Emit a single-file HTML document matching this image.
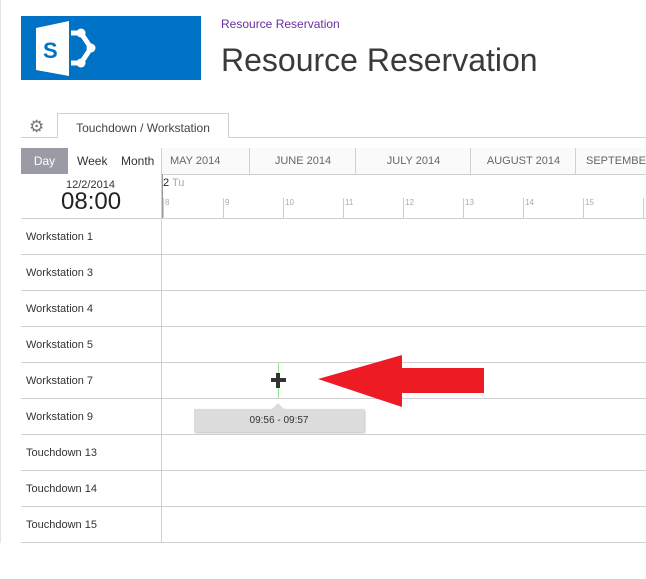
<!DOCTYPE html>
<html><head><style>
body{margin:0;width:646px;height:543px;overflow:hidden;background:#fff;font-family:"Segoe UI","Liberation Sans",sans-serif;position:relative;color:#333}
.a{position:absolute}
.row{position:absolute;left:21px;width:625px;height:36px;border-top:1px solid #d0d0d0}
.row span{position:absolute;left:5px;top:12px;font-size:11px;color:#333}
.m{position:absolute;top:148px;height:26px;border-left:1px solid #d0d0d0;font-size:11px;color:#666;line-height:26px;text-align:center;background:#fafafa}
.t{position:absolute;top:198px;height:20px;border-left:1px solid #ccc;font-size:8px;color:#aaa;padding-left:1px}
</style></head><body>
<div class="a" style="left:0;top:0;width:1px;height:543px;background:#e4e4e4"></div>
<div class="a" style="left:21px;top:16px;width:180px;height:64px;background:#0072c6"></div>
<svg class="a" style="left:36px;top:20px" width="60" height="58" viewBox="0 0 60 58">
<polygon points="0,8 33,1 33,56 0,50" fill="#fff"/>
<text x="7" y="38" font-size="22" font-weight="bold" fill="#0072c6" font-family="Liberation Sans">S</text>
<path d="M35 13 L45 13 L55 28 L45 43 L35 43" stroke="#fff" stroke-width="5" fill="none"/>
<circle cx="45" cy="13" r="4.5" fill="#fff"/><circle cx="55" cy="28" r="4.5" fill="#fff"/><circle cx="45" cy="43" r="4.5" fill="#fff"/>
</svg>
<div class="a" style="left:221px;top:17px;font-size:12px;color:#6b2ea0">Resource Reservation</div>
<div class="a" style="left:221px;top:42px;font-size:32px;font-weight:300;color:#3a3a3a">Resource Reservation</div>
<div class="a" style="left:29px;top:117px;font-size:17px;color:#777">⚙</div>
<div class="a" style="left:57px;top:113px;width:170px;height:24px;border:1px solid #d0d0d0;border-bottom:none;background:#fff;font-size:12px;line-height:29px;text-align:center;color:#444;z-index:2">Touchdown / Workstation</div>
<div class="a" style="left:21px;top:137px;width:625px;height:1px;background:#d0d0d0"></div>
<div class="a" style="left:21px;top:148px;width:47px;height:26px;background:#9b9ba5;color:#fff;font-size:12px;line-height:26px;text-align:center">Day</div>
<div class="a" style="left:77px;top:148px;font-size:12px;line-height:26px">Week</div>
<div class="a" style="left:121px;top:148px;font-size:12px;line-height:26px">Month</div>
<div class="m" style="left:161px;text-align:left;padding-left:8px;width:80px">MAY 2014</div>
<div class="m" style="left:249px;width:106px">JUNE 2014</div>
<div class="m" style="left:355px;width:115px">JULY 2014</div>
<div class="m" style="left:470px;width:105px">AUGUST 2014</div>
<div class="m" style="left:575px;width:80px;text-align:left;padding-left:10px;overflow:hidden;white-space:nowrap">SEPTEMBER</div>
<div class="a" style="left:161px;top:174px;width:485px;height:1px;background:#d0d0d0"></div>
<div class="a" style="left:161px;top:148px;width:1px;height:395px;background:#d0d0d0"></div>
<div class="a" style="left:162px;top:174px;width:1px;height:44px;background:#999"></div>
<div class="a" style="left:66px;top:179px;font-size:11px;color:#333">12/2/2014</div>
<div class="a" style="left:61px;top:188px;font-size:24px;font-weight:300;color:#222">08:00</div>
<div class="a" style="left:163px;top:177px;font-size:11px;color:#222">2 <span style="color:#aaa">Tu</span></div>
<div class="t" style="left:163px">8</div><div class="t" style="left:223px">9</div><div class="t" style="left:283px">10</div><div class="t" style="left:343px">11</div><div class="t" style="left:403px">12</div><div class="t" style="left:463px">13</div><div class="t" style="left:523px">14</div><div class="t" style="left:583px">15</div><div class="t" style="left:643px"></div>
<div class="row" style="top:218px"><span>Workstation 1</span></div>
<div class="row" style="top:254px"><span>Workstation 3</span></div>
<div class="row" style="top:290px"><span>Workstation 4</span></div>
<div class="row" style="top:326px"><span>Workstation 5</span></div>
<div class="row" style="top:362px"><span>Workstation 7</span></div>
<div class="row" style="top:398px"><span>Workstation 9</span></div>
<div class="row" style="top:434px"><span>Touchdown 13</span></div>
<div class="row" style="top:470px"><span>Touchdown 14</span></div>
<div class="row" style="top:506px"><span>Touchdown 15</span></div>
<div class="row" style="top:542px"></div>
<div class="a" style="left:278px;top:363px;width:1px;height:35px;background:#8ee88e"></div>
<div class="a" style="left:271px;top:378px;width:15px;height:4px;background:#333"></div>
<div class="a" style="left:276px;top:373px;width:4px;height:15px;background:#333"></div>
<div class="a" style="left:194px;top:409px;width:170px;height:23px;background:#dcdcdc;box-shadow:1px 1px 2px #bbb;font-size:10px;text-align:center;line-height:24px;color:#333">09:56 - 09:57</div>
<div class="a" style="left:272px;top:403px;width:0;height:0;border-left:6px solid transparent;border-right:6px solid transparent;border-bottom:6px solid #dcdcdc"></div>
<svg class="a" style="left:316px;top:354px" width="170" height="54"><polygon points="2,25 86,1 86,14 168,14 168,39 86,39 86,53" fill="#ed1c24"/></svg>
</body></html>
